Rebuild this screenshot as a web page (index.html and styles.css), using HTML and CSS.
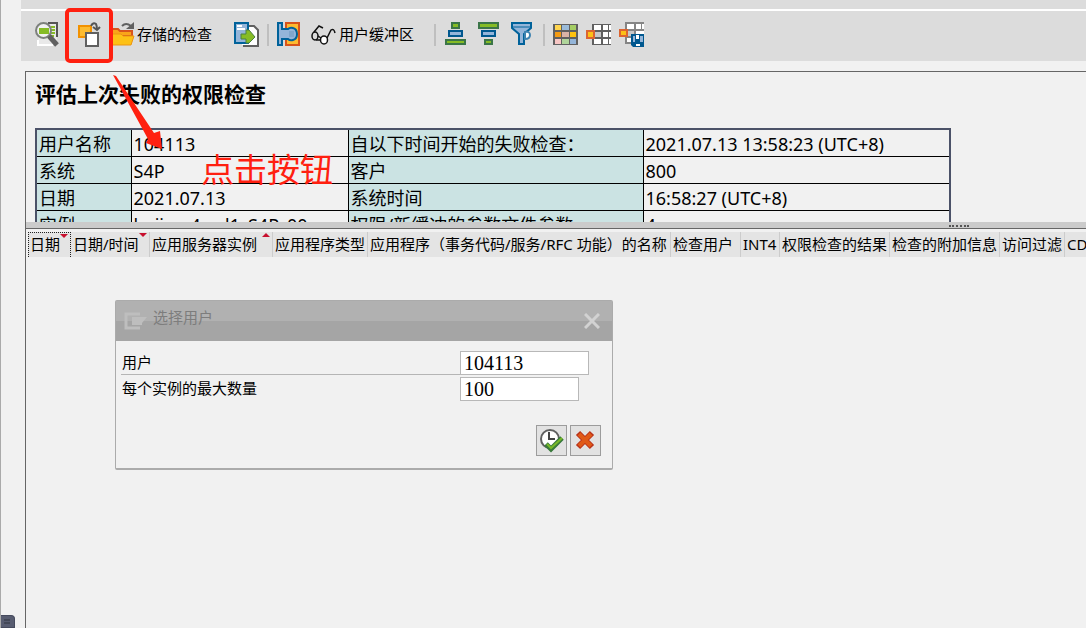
FILE: index.html
```html
<!DOCTYPE html>
<html lang="zh-CN">
<head>
  <meta charset="UTF-8">
  <meta name="viewport" content="width=device-width, initial-scale=1.0">
  <title>评估上次失败的权限检查</title>
  <link rel="stylesheet" href="styles.css">
</head>
<body>
  <div class="rail">
    <button class="rail-tab" aria-label="展开">
      <svg width="6" height="6" viewBox="0 0 6 6"><path d="M0 1h6M0 4h6" stroke="#30343f" stroke-width="1"/></svg>
    </button>
  </div>

  <main class="window">
    <div class="menu-strip"></div>

    <div class="toolbar">
      <button class="tool spaced" aria-label="明细">
        <svg class="icon" viewBox="0 0 25 25">
          <path d="M4 1h18v22H3z" fill="#e9e9e9"/>
          <path d="M13 1h9v14" fill="none" stroke="#555" stroke-width="2"/>
          <path d="M16 5h4M16 8h4M16 11h4M16 14h3" stroke="#86bc25" stroke-width="2"/>
          <path d="M3 18v5h15" fill="none" stroke="#fff" stroke-width="2"/>
          <circle cx="8.500" cy="8.500" r="7.500" fill="#f2f2f2" stroke="#7d817d" stroke-width="2"/>
          <path d="M4 6h10v6H4z" fill="#86bc25"/>
          <path d="M14 14l8 9" stroke="#606060" stroke-width="5"/>
        </svg>
      </button>
      <button class="tool" aria-label="选择用户">
        <svg class="icon" viewBox="0 0 25 25">
          <path d="M2 4h12v11H2z" fill="#fdbb30" stroke="#f29100" stroke-width="2"/>
          <path d="M9 11h12v13H9z" fill="#fff" stroke="#606060" stroke-width="2"/>
          <path d="M14 4q2-4 5-2 1 2 1 6M16 5l4 3 3-3" fill="none" stroke="#555" stroke-width="2"/>
        </svg>
      </button>
      <button class="tool folder" aria-label="存储的检查">
        <svg class="icon" viewBox="0 0 25 25">
          <path d="M1 7h7l2 2h12v5H1z" fill="#f9a51a" stroke="#d8541c" stroke-width="2"/>
          <path d="M1 23V12h10l2 2h11l-3 9z" fill="#fdc116" stroke="#ec9512"/>
          <path d="M12 4q4-4 9 0" fill="none" stroke="#606060" stroke-width="2"/>
          <path d="M24 0v7h-8z" fill="#606060"/>
        </svg>
        <span>存储的检查</span>
      </button>
      <button class="tool" aria-label="执行">
        <svg class="icon" viewBox="0 0 25 25">
          <path d="M14 4h6l4 4v15H8v-6h6z" fill="#fff"/>
          <path d="M15 4h5l4 4v16H9" fill="none" stroke="#606060" stroke-width="2"/>
          <path d="M1 1h13v20H1z" fill="#94b5d9" stroke="#00629a" stroke-width="2"/>
          <path d="M3 4h5M3 7h8" stroke="#fff" stroke-width="2"/>
          <path d="M7 12h5V8h3l6 7-6 6h-3v-4H7z" fill="#86bc25" stroke="#4a8040"/>
        </svg>
      </button>
      <span class="separator"></span>
      <button class="tool" aria-label="连接">
        <svg class="icon" viewBox="0 0 25 25">
          <path d="M9 1h13v22H9z" fill="#fdbb30" stroke="#d8541c" stroke-width="2"/>
          <path d="M1 1h4v6h6q2-2 5-1 4 1 4 6t-4 6q-3 1-5-1H5v6H1z" fill="#94b5d9" stroke="#00629a" stroke-width="2"/>
          <path d="M12 9h5v6h-5z" fill="#7fa6cc"/>
        </svg>
      </button>
      <button class="tool buffer" aria-label="用户缓冲区">
        <svg class="icon" viewBox="0 0 25 25">
          <g fill="none" stroke="#111" stroke-width="1.500">
            <ellipse cx="4" cy="14" rx="3" ry="4"/>
            <ellipse cx="13" cy="18" rx="3.500" ry="4" fill="#fff"/>
            <path d="M3 10l5-6 4 2M7 14l3 2M16 16l4-8q3-2 4 3M5 18l5 0"/>
          </g>
        </svg>
        <span>用户缓冲区</span>
      </button>
      <span class="separator first"></span>
      <button class="tool" aria-label="升序排序">
        <svg class="icon" viewBox="0 0 25 25">
          <g fill="#86bc25" stroke="#3b7548" stroke-width="2">
            <path d="M8 1h7v5H8z"/><path d="M2 18h19v4H2z"/>
          </g>
          <path d="M5 9h13v5H5z" fill="#94b5d9" stroke="#00588f" stroke-width="2"/>
        </svg>
      </button>
      <button class="tool" aria-label="降序排序">
        <svg class="icon" viewBox="0 0 25 25">
          <g fill="#86bc25" stroke="#3b7548" stroke-width="2">
            <path d="M2 1h19v5H2z"/><path d="M8 18h7v4H8z"/>
          </g>
          <path d="M5 9h13v5H5z" fill="#94b5d9" stroke="#00588f" stroke-width="2"/>
        </svg>
      </button>
      <button class="tool" aria-label="过滤器">
        <svg class="icon" viewBox="0 0 25 25">
          <path d="M2 1h19v5l-7 6v10H9V12L2 6z" fill="#94b5d9" stroke="#00629a" stroke-width="2"/>
          <path d="M3 5h17" stroke="#00629a"/>
          <path d="M15 10q5-1 5 3t-5 4z" fill="#fff" stroke="#3d82b0" stroke-width="2"/>
        </svg>
      </button>
      <span class="separator"></span>
      <button class="tool" aria-label="选择布局">
        <svg class="icon" viewBox="0 0 25 25">
          <path d="M0 2h25v21H0z" fill="#606060"/>
          <path d="M2 3h6v5H2z" fill="#ffd54f"/><path d="M9 3h7v5H9z" fill="#9bbbd9"/><path d="M17 3h6v5h-6z" fill="#a5cd64"/>
          <path d="M2 10h6v5H2z" fill="#f39a12"/><path d="M9 10h7v5H9z" fill="#d9b3a6"/><path d="M17 10h6v5h-6z" fill="#ffc20e"/>
          <path d="M2 17h6v5H2z" fill="#f7c6c4"/><path d="M9 17h7v5H9z" fill="#b0d59b"/><path d="M17 17h6v5h-6z" fill="#94b5d9"/>
        </svg>
      </button>
      <button class="tool" aria-label="更改布局">
        <svg class="icon" viewBox="0 0 25 25">
          <path d="M6 2h19v21H6z" fill="#606060"/>
          <path d="M8 3h7v5H8zM17 3h5v5h-5zM23 3h2v5h-2zM17 10h5v5h-5zM23 10h2v5h-2zM8 17h7v5H8zM17 17h5v5h-5zM23 17h2v5h-2z" fill="#fff"/>
          <path d="M6 10h9v5H6z" fill="#c8c8c8"/>
          <path d="M1 9h7v7H1z" fill="#fdc116" stroke="#dc6430" stroke-width="2"/>
        </svg>
      </button>
      <button class="tool" aria-label="保存布局">
        <svg class="icon" viewBox="0 0 25 25">
          <path d="M6 0h19v22H6z" fill="#858585"/>
          <path d="M8 2h7v5H8zM17 2h5v5h-5zM23 2h2v5h-2zM17 9h8v4h-8zM8 16h5v4H8z" fill="#fff"/>
          <path d="M6 9h9v5H6z" fill="#c8c8c8"/>
          <path d="M1 8h7v6H1z" fill="#fdc116" stroke="#dc6430" stroke-width="2"/>
          <path d="M12 12h13v13H14l-2-2z" fill="#00588f"/>
          <path d="M14 14h2v6h-2zM21 14h3v6h-3z" fill="#94b5d9"/>
          <path d="M17 13h3v4h-3zM17 22h4v2h-4z" fill="#fff"/>
        </svg>
      </button>
    </div>

    <div class="workspace">
      <section class="report">
        <h1>评估上次失败的权限检查</h1>
        <table class="facts">
          <tr><th>用户名称</th><td>104113</td><th>自以下时间开始的失败检查：</th><td>2021.07.13 13:58:23 (UTC+8)</td></tr>
          <tr><th>系统</th><td>S4P</td><th>客户</th><td>800</td></tr>
          <tr><th>日期</th><td>2021.07.13</td><th>系统时间</th><td>16:58:27 (UTC+8)</td></tr>
          <tr><th>实例</th><td>beijars4prd1_S4P_00</td><th>权限/新缓冲的参数文件参数</th><td>4</td></tr>
        </table>
      </section>

      <div class="splitter"><span class="grip"></span></div>

      <section class="results">
        <table class="grid">
          <colgroup>
            <col class="w-date"><col class="w-time"><col class="w-server"><col class="w-type"><col class="w-name"><col class="w-user"><col class="w-int"><col class="w-result"><col class="w-result"><col class="w-filter"><col class="w-cds">
          </colgroup>
          <thead>
            <tr>
              <th class="focused">日期<i class="sort down"></i></th>
              <th>日期/时间<i class="sort down"></i></th>
              <th>应用服务器实例<i class="sort up"></i></th>
              <th>应用程序类型</th>
              <th>应用程序（事务代码/服务/RFC 功能）的名称</th>
              <th>检查用户</th>
              <th>INT4</th>
              <th>权限检查的结果</th>
              <th>检查的附加信息</th>
              <th>访问过滤</th>
              <th>CD</th>
            </tr>
          </thead>
        </table>
      </section>
    </div>
  </main>

  <form class="dialog" role="dialog" aria-labelledby="dialog-title">
    <header class="dialog-head">
      <svg width="24" height="18" viewBox="0 0 24 18"><path d="M16 2H2v14h14" fill="none" stroke="#bebebe" stroke-width="3"/><path d="M8 5h15l-5 6v2H8z" fill="#bebebe"/></svg>
      <h2 id="dialog-title">选择用户</h2>
      <button type="button" class="close" aria-label="关闭">
        <svg width="16" height="16" viewBox="0 0 16 16"><path d="M1 1l14 14M15 1L1 15" stroke="#d2d2d2" stroke-width="3"/></svg>
      </button>
    </header>
    <div class="dialog-body">
      <div class="field ruled">
        <label for="user">用户</label>
        <input id="user" type="text" value="104113">
      </div>
      <div class="field">
        <label for="limit">每个实例的最大数量</label>
        <input id="limit" class="short" type="text" value="100">
      </div>
      <div class="actions">
        <button type="submit" aria-label="执行">
          <svg width="25" height="25" viewBox="0 0 25 25">
            <circle cx="11" cy="11" r="9" fill="#fff" stroke="#606060" stroke-width="2"/>
            <path d="M10 4v7h6" fill="none" stroke="#444" stroke-width="2"/>
            <path d="M7 16l5 5L23 10" fill="none" stroke="#39793c" stroke-width="5"/>
            <path d="M8 16l4 4L23 10" fill="none" stroke="#78b928" stroke-width="2"/>
          </svg>
        </button>
        <button type="button" aria-label="取消">
          <svg width="25" height="25" viewBox="0 0 25 25">
            <path d="M5 5l14 14M19 5L5 19" stroke="#b8321a" stroke-width="6"/>
            <path d="M6 6l12 12M18 6L6 18" stroke="#e05a18" stroke-width="4"/>
          </svg>
        </button>
      </div>
    </div>
  </form>

  <!-- callout: which button to click -->
  <div class="callout-box"></div>
  <svg class="callout-arrow" width="54" height="80" viewBox="0 0 54 80"><path d="M2 1l3 1 38 57 6-2 2 18-16-6 2-4z" fill="#ff2010"/></svg>
  <p class="callout-text">点击按钮</p>
</body>
</html>
```
FILE: styles.css
```css
* {
  box-sizing: border-box;
}
body {
  margin: 0;
  min-height: 100vh;
  display: flex;
  position: relative;
  overflow: hidden;
  background-color: #f1f1f1;
  color: #000;
  font-family: "Noto Sans", "Noto Sans CJK SC", sans-serif;
  font-size: 15px;
}
button {
  padding: 0;
  border: none;
  background: none;
  color: inherit;
  font: inherit;
  cursor: pointer;
}
svg {
  display: block;
}
.rail {
  flex: 0 0 21px;
  display: flex;
  align-items: flex-end;
  border-left: 1px solid #aaa;
}
.rail-tab {
  width: 14px;
  height: 13px;
  padding-left: 3px;
  background-color: #575c70;
  border: 1px solid #454a5d;
  border-left: none;
  border-top-right-radius: 4px;
}
.window {
  flex: 1;
  min-width: 0;
  display: flex;
  flex-direction: column;
}
.menu-strip {
  height: 11px;
  background-color: #dcdcdc;
  border-bottom: 2px solid #fff;
}
.toolbar {
  display: flex;
  align-items: center;
  gap: 8px;
  height: 50px;
  padding: 0 14px 3px;
  background-color: #dcdcdc;
}
.tool {
  display: flex;
  align-items: center;
  gap: 2px;
  line-height: 25px;
  white-space: nowrap;
}
.tool.spaced {
  margin-right: 9px;
}
.tool.folder {
  margin-right: 14px;
}
.tool.buffer {
  gap: 3px;
  margin-left: 1px;
}
.icon {
  width: 25px;
  height: 25px;
}
.separator {
  width: 2px;
  height: 22px;
  background-color: #bfbfbf;
}
.separator.first {
  margin-left: 12px;
}
.workspace {
  flex: 1;
  margin: 10px 0 0 4px;
  border-top: 1px solid #666;
  border-left: 1px solid #666;
  display: flex;
  flex-direction: column;
}
.report {
  flex: 0 0 150px;
  overflow: hidden;
  padding: 8px 9px;
}
.report h1 {
  margin: 0 0 20px;
  font-size: 21px;
  line-height: 28px;
  font-weight: 700;
}
.facts {
  table-layout: fixed;
  width: 916px;
  border-collapse: collapse;
  border: 2px solid #4b5268;
  font-size: 18px;
  line-height: 24px;
}
.facts th,
.facts td {
  padding: 2px 2px 0;
  border: 1px solid #000;
  text-align: left;
  font-weight: 400;
  white-space: nowrap;
}
.facts th {
  width: 295px;
  background-color: #cbe3e3;
}
.facts th:first-child {
  width: 95px;
}
.facts td:nth-child(2) {
  width: 217px;
}
.splitter {
  height: 7px;
  background-color: #cbcbcb;
  border-bottom: 1px solid #666;
}
.grip {
  display: block;
  width: 20px;
  margin: 3px 0 0 923px;
  border-top: 2px dotted #555;
}
.results {
  flex: 1;
  overflow: hidden;
  padding: 3px 0 0 2px;
}
.grid {
  table-layout: fixed;
  width: 1060px;
  border-spacing: 0;
  background-color: #e4e4e4;
}
.grid th {
  position: relative;
  height: 25px;
  padding: 0 2px 2px;
  border-right: 1px solid #ccc;
  text-align: left;
  font-weight: 400;
  line-height: 22px;
  white-space: nowrap;
}
.grid th.focused {
  border: 1px dotted #222;
  border-bottom: none;
  padding: 0 1px 2px;
}
.w-date { width: 43px; }
.w-time { width: 79px; }
.w-server { width: 123px; }
.w-type { width: 95px; }
.w-name { width: 303px; }
.w-user { width: 70px; }
.w-int { width: 39px; }
.w-result { width: 110px; }
.w-filter { width: 65px; }
.w-cds { width: 23px; }
.sort {
  position: absolute;
  top: 1px;
  right: 2px;
  border-left: 4px solid transparent;
  border-right: 4px solid transparent;
}
.sort.down {
  border-top: 4px solid #c8102e;
}
.sort.up {
  border-bottom: 4px solid #c8102e;
}
.dialog {
  position: absolute;
  left: 115px;
  top: 300px;
  width: 498px;
  background-color: #f1f1f1;
  border: 1px solid #ababab;
  border-bottom-width: 2px;
  border-radius: 2px;
}
.dialog-head {
  display: flex;
  align-items: center;
  gap: 5px;
  height: 40px;
  padding: 0 12px 0 8px;
  background: linear-gradient(#b1b1b1 50%, #a5a5a5 50%);
}
.dialog-head h2 {
  flex: 1;
  margin: 0;
  padding-bottom: 10px;
  color: #7d7d7d;
  font-size: 15px;
  font-weight: 400;
}
.dialog-body {
  padding: 10px 11px 12px 5px;
}
.field {
  display: flex;
  align-items: center;
  margin-bottom: 2px;
}
.field label {
  flex: 0 0 339px;
  height: 24px;
  padding-left: 1px;
  line-height: 22px;
  border-bottom: 1px solid transparent;
}
.field.ruled label {
  border-bottom-color: #b5b5b5;
}
.field input {
  width: 129px;
  height: 24px;
  padding: 0 3px;
  border: 1px solid #b8b8b8;
  background-color: #fff;
  font-family: "Liberation Serif", serif;
  font-size: 20px;
}
.field input.short {
  width: 119px;
}
.actions {
  display: flex;
  justify-content: flex-end;
  gap: 3px;
  margin-top: 24px;
}
.actions button {
  width: 31px;
  height: 31px;
  padding: 2px;
  border: 1px solid #9c9c9c;
  background-color: #e2e2e2;
}
.callout-box {
  position: absolute;
  left: 65px;
  top: 8px;
  width: 48px;
  height: 55px;
  border: 4px solid #ff2010;
  border-radius: 5px;
  pointer-events: none;
}
.callout-arrow {
  position: absolute;
  left: 111px;
  top: 74px;
  pointer-events: none;
}
.callout-text {
  position: absolute;
  left: 201px;
  top: 148px;
  margin: 0;
  color: #ff2010;
  font-size: 33px;
  line-height: 44px;
  pointer-events: none;
}
```
